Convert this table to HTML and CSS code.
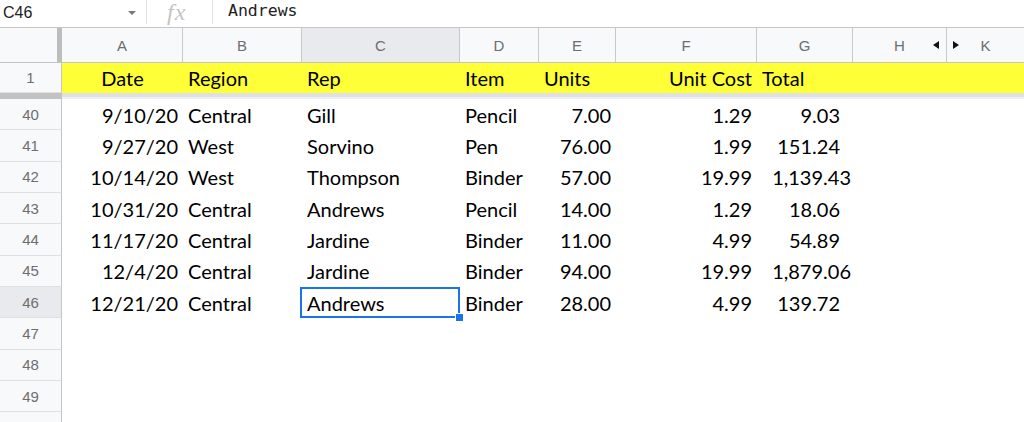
FILE: index.html
```html
<!DOCTYPE html>
<html>
<head>
<meta charset="utf-8">
<link rel="stylesheet" href="styles.css">
</head>
<body>
<div class="sheet">
  <div class="fbar">
    <div class="namebox"><span class="ref">C46</span><span class="dd"></span></div>
    <div class="fx">fx</div>
    <div class="fval">Andrews</div>
  </div>
  <div class="row colhead">
    <div class="corner"></div>
    <div class="ch">A</div>
    <div class="ch">B</div>
    <div class="ch sel">C</div>
    <div class="ch">D</div>
    <div class="ch">E</div>
    <div class="ch">F</div>
    <div class="ch">G</div>
    <div class="ch hcol">H<span class="tri left"></span></div>
    <div class="ch kcol"><span class="tri right"></span>K</div>
  </div>
  <div class="row hdr">
    <div class="rh">1</div>
    <div class="c ctr">Date</div>
    <div class="c">Region</div>
    <div class="c">Rep</div>
    <div class="c">Item</div>
    <div class="c">Units</div>
    <div class="c r">Unit Cost</div>
    <div class="c">Total</div>
    <div class="c"></div>
    <div class="c"></div>
  </div>
  <div class="freeze"><div class="fz-rh"></div><div class="fz-c"></div></div>
  <div class="row">
    <div class="rh">40</div><div class="c r">9/10/20</div><div class="c">Central</div><div class="c">Gill</div><div class="c">Pencil</div><div class="c r">7.00</div><div class="c r">1.29</div><div class="c r tot">9.03</div><div class="c"></div><div class="c"></div>
  </div>
  <div class="row">
    <div class="rh">41</div><div class="c r">9/27/20</div><div class="c">West</div><div class="c">Sorvino</div><div class="c">Pen</div><div class="c r">76.00</div><div class="c r">1.99</div><div class="c r tot">151.24</div><div class="c"></div><div class="c"></div>
  </div>
  <div class="row">
    <div class="rh">42</div><div class="c r">10/14/20</div><div class="c">West</div><div class="c">Thompson</div><div class="c">Binder</div><div class="c r">57.00</div><div class="c r">19.99</div><div class="c r tot wide">1,139.43</div><div class="c"></div><div class="c"></div>
  </div>
  <div class="row">
    <div class="rh">43</div><div class="c r">10/31/20</div><div class="c">Central</div><div class="c">Andrews</div><div class="c">Pencil</div><div class="c r">14.00</div><div class="c r">1.29</div><div class="c r tot">18.06</div><div class="c"></div><div class="c"></div>
  </div>
  <div class="row">
    <div class="rh">44</div><div class="c r">11/17/20</div><div class="c">Central</div><div class="c">Jardine</div><div class="c">Binder</div><div class="c r">11.00</div><div class="c r">4.99</div><div class="c r tot">54.89</div><div class="c"></div><div class="c"></div>
  </div>
  <div class="row">
    <div class="rh">45</div><div class="c r">12/4/20</div><div class="c">Central</div><div class="c">Jardine</div><div class="c">Binder</div><div class="c r">94.00</div><div class="c r">19.99</div><div class="c r tot wide">1,879.06</div><div class="c"></div><div class="c"></div>
  </div>
  <div class="row">
    <div class="rh sel">46</div><div class="c r">12/21/20</div><div class="c">Central</div><div class="c active">Andrews<span class="handle"></span></div><div class="c">Binder</div><div class="c r">28.00</div><div class="c r">4.99</div><div class="c r tot">139.72</div><div class="c"></div><div class="c"></div>
  </div>
  <div class="row"><div class="rh">47</div></div>
  <div class="row"><div class="rh">48</div></div>
  <div class="row"><div class="rh">49</div></div>
  <div class="row"><div class="rh">50</div></div>
</div>
</body>
</html>
```
FILE: styles.css
```css
html, body {
  margin: 0;
  padding: 0;
  background: #fff;
}
body {
  width: 1024px;
  height: 422px;
  overflow: hidden;
}
.sheet {
  display: flex;
  flex-direction: column;
  height: 422px;
  overflow: hidden;
}
.fbar {
  display: flex;
  align-items: stretch;
  border-bottom: 1px solid #c7c7c7;
  box-sizing: border-box;
  height: 28px;
  flex: none;
}
.namebox {
  width: 147px;
  display: flex;
  align-items: center;
  border-right: 1px solid #e0e0e0;
  margin-bottom: 3px;
  box-sizing: border-box;
}
.ref {
  font-family: "Liberation Sans", Arial, sans-serif;
  font-size: 16px;
  color: #222;
  padding-left: 3px;
  flex: 1;
  margin-top: 2px;
}
.dd {
  width: 0;
  height: 0;
  border-left: 4px solid transparent;
  border-right: 4px solid transparent;
  border-top: 4px solid #777;
  margin-right: 10px;
  margin-top: 2px;
}
.fx {
  width: 66px;
  box-sizing: border-box;
  border-right: 1px solid #e0e0e0;
  margin-bottom: 3px;
  display: flex;
  align-items: center;
  font-family: "Liberation Serif", serif;
  font-style: italic;
  font-size: 24px;
  letter-spacing: 1px;
  color: #c4c4c4;
  padding-left: 20px;
  line-height: 24px;
}
.fval {
  font-family: "DejaVu Sans Mono", monospace;
  font-size: 16.5px;
  color: #222;
  padding-left: 15px;
  line-height: 22px;
}
.row {
  display: grid;
  grid-template-columns: 62px 121px 119px 158px 79px 77px 141px 96px 94px 1fr;
  height: 31.33px;
  flex: none;
  font-family: Lato, "Open Sans", sans-serif;
  font-size: 20px;
  color: #000;
}
.colhead {
  height: 35px;
  background: #f8f9fa;
  border-bottom: 1px solid #c4c4c4;
  box-sizing: border-box;
}
.corner {
  border-right: 5px solid #bdbdbd;
  background: #f8f9fa;
}
.ch {
  border-right: 1px solid #c9c9c9;
  display: flex;
  align-items: center;
  justify-content: center;
  font-family: "Liberation Sans", Arial, sans-serif;
  font-size: 15px;
  color: #6e6e6e;
  position: relative;
}
.ch.sel {
  background: #e8eaed;
}
.kcol { border-right: none; }
.tri {
  position: absolute;
  top: 13px;
  width: 0;
  height: 0;
  border-top: 4.5px solid transparent;
  border-bottom: 4.5px solid transparent;
}
.tri.left {
  right: 7px;
  border-right: 6px solid #111;
}
.tri.right {
  left: 6px;
  border-left: 6px solid #111;
}
.hdr {
  height: 30px;
  background: #ffff38;
}
.rh {
  background: #f8f9fa;
  border-right: 1px solid #c4c4c4;
  border-bottom: 1px solid #e0e0e0;
  box-sizing: border-box;
  display: flex;
  align-items: center;
  justify-content: center;
  font-family: "Liberation Sans", Arial, sans-serif;
  font-size: 15px;
  color: #6e6e6e;
}
.rh.sel { background: #e8eaed; }
.c {
  display: flex;
  align-items: center;
  padding: 0 5px;
  white-space: nowrap;
  position: relative;
  min-width: 0;
}
.c.r { justify-content: flex-end; }
.c.ctr { justify-content: center; }
.c.tot { padding-right: 13px; }
.c.tot.wide { padding-right: 2px; }
.freeze {
  display: flex;
  height: 6px;
  flex: none;
}
.fz-rh {
  width: 62px;
  background: #c2c2c2;
  border-right: 1px solid #c4c4c4;
  box-sizing: border-box;
}
.fz-c {
  flex: 1;
  background: #dde0e6;
  border-bottom: 2px solid #eceef2;
}
.c.active {
  box-shadow: inset 0 0 0 2px #1a73e8;
  margin-left: -2px;
  padding-left: 7px;
}
.handle {
  position: absolute;
  right: -4px;
  bottom: -4px;
  width: 7px;
  height: 7px;
  background: #1a73e8;
  border: 1px solid #fff;
}
```
